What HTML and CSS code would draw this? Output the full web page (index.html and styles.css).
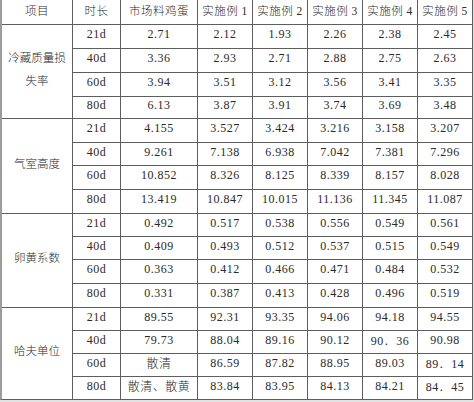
FILE: index.html
```html
<!DOCTYPE html>
<html lang="zh">
<head>
<meta charset="utf-8">
<title>表</title>
<link rel="stylesheet" href="styles.css">
</head>
<body>
<div class="grid">
  <div class="c h">项目</div><div class="c h">时长</div><div class="c h">市场料鸡蛋</div><div class="c h">实施例 1</div><div class="c h">实施例 2</div><div class="c h">实施例 3</div><div class="c h">实施例 4</div><div class="c h">实施例 5</div>

  <div class="c label">冷藏质量损失率</div>
  <div class="c">21d</div><div class="c">2.71</div><div class="c">2.12</div><div class="c">1.93</div><div class="c">2.26</div><div class="c">2.38</div><div class="c">2.45</div>
  <div class="c">40d</div><div class="c">3.36</div><div class="c">2.93</div><div class="c">2.71</div><div class="c">2.88</div><div class="c">2.75</div><div class="c">2.63</div>
  <div class="c">60d</div><div class="c">3.94</div><div class="c">3.51</div><div class="c">3.12</div><div class="c">3.56</div><div class="c">3.41</div><div class="c">3.35</div>
  <div class="c">80d</div><div class="c">6.13</div><div class="c">3.87</div><div class="c">3.91</div><div class="c">3.74</div><div class="c">3.69</div><div class="c">3.48</div>

  <div class="c label">气室高度</div>
  <div class="c">21d</div><div class="c">4.155</div><div class="c">3.527</div><div class="c">3.424</div><div class="c">3.216</div><div class="c">3.158</div><div class="c">3.207</div>
  <div class="c">40d</div><div class="c">9.261</div><div class="c">7.138</div><div class="c">6.938</div><div class="c">7.042</div><div class="c">7.381</div><div class="c">7.296</div>
  <div class="c">60d</div><div class="c">10.852</div><div class="c">8.326</div><div class="c">8.125</div><div class="c">8.339</div><div class="c">8.157</div><div class="c">8.028</div>
  <div class="c">80d</div><div class="c">13.419</div><div class="c">10.847</div><div class="c">10.015</div><div class="c">11.136</div><div class="c">11.345</div><div class="c">11.087</div>

  <div class="c label">卵黄系数</div>
  <div class="c">21d</div><div class="c">0.492</div><div class="c">0.517</div><div class="c">0.538</div><div class="c">0.556</div><div class="c">0.549</div><div class="c">0.561</div>
  <div class="c">40d</div><div class="c">0.409</div><div class="c">0.493</div><div class="c">0.512</div><div class="c">0.537</div><div class="c">0.515</div><div class="c">0.549</div>
  <div class="c">60d</div><div class="c">0.363</div><div class="c">0.412</div><div class="c">0.466</div><div class="c">0.471</div><div class="c">0.484</div><div class="c">0.532</div>
  <div class="c">80d</div><div class="c">0.331</div><div class="c">0.387</div><div class="c">0.413</div><div class="c">0.428</div><div class="c">0.496</div><div class="c">0.519</div>

  <div class="c label">哈夫单位</div>
  <div class="c">21d</div><div class="c">89.55</div><div class="c">92.31</div><div class="c">93.35</div><div class="c">94.06</div><div class="c">94.18</div><div class="c">94.55</div>
  <div class="c">40d</div><div class="c">79.73</div><div class="c">88.04</div><div class="c">89.16</div><div class="c">90.12</div><div class="c">90．36</div><div class="c">90.98</div>
  <div class="c">60d</div><div class="c">散清</div><div class="c">86.59</div><div class="c">87.82</div><div class="c">88.95</div><div class="c">89.03</div><div class="c">89．14</div>
  <div class="c">80d</div><div class="c">散清、散黄</div><div class="c">83.84</div><div class="c">83.95</div><div class="c">84.13</div><div class="c">84.21</div><div class="c">84．45</div>
</div>
</body>
</html>
```
FILE: styles.css
```css
html, body {
  margin: 0;
  padding: 0;
  background: #e2e2e2;
}
.grid {
  display: grid;
  width: 470px;
  grid-template-columns: 70px 47px 76px 54px 54px 54px 54px 54px;
  grid-template-rows: 24px 23px 23px 23px 21px 23px 22px 23px 23px 22px 22px 23px 23px 22px 22px 22px 22px;
  gap: 1px;
  background: #5e5e5e;
  border-left: 2px solid #9c9c9c;
  border-right: 1px solid #5e5e5e;
  border-bottom: 1px solid #5e5e5e;
  font-family: "Liberation Serif", "Noto Sans CJK SC", serif;
  font-size: 12px;
  font-weight: 300;
  letter-spacing: 0.5px;
  color: #2a2a2a;
}
.c {
  background: #fff;
  display: flex;
  align-items: center;
  justify-content: center;
  text-align: center;
  padding-bottom: 4px;
  box-sizing: border-box;
  white-space: nowrap;
}
.h {
  font-size: 11.5px;
}
.label {
  grid-row: span 4;
  white-space: normal;
  line-height: 23.5px;
  letter-spacing: 0;
  font-size: 11.5px;
  padding: 0 4px 3px;
}
```
